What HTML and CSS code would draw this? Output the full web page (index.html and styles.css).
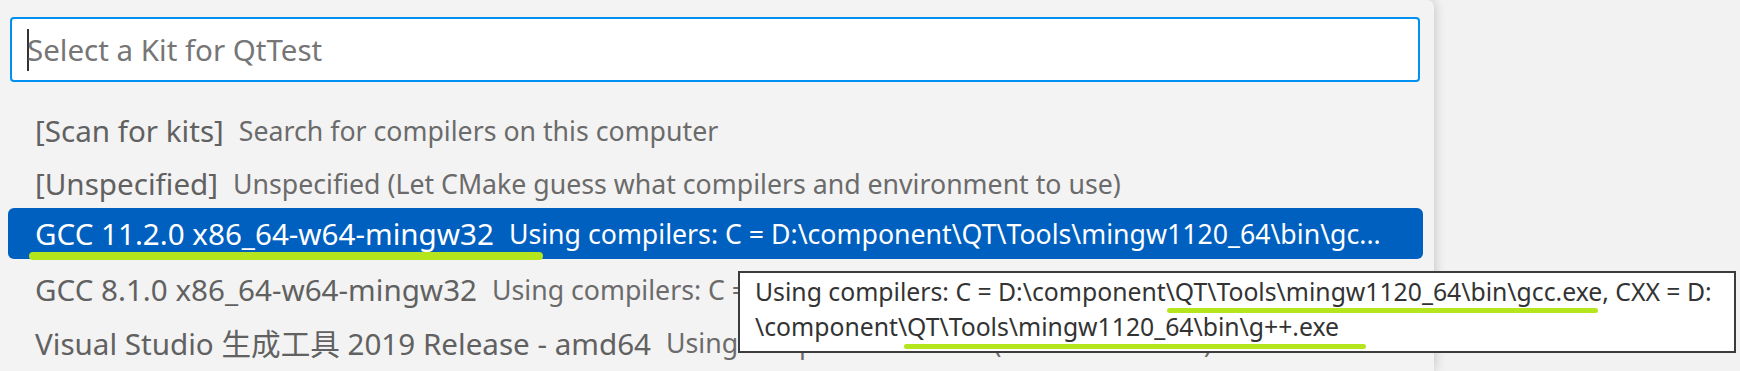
FILE: index.html
```html
<!DOCTYPE html>
<html lang="en">
<head>
<meta charset="utf-8">
<title>Select a Kit</title>
<link rel="stylesheet" href="styles.css">
</head>
<body>
<div class="panel">
  <div class="input">
    <span class="caret"></span><span class="placeholder">Select a Kit for QtTest</span>
  </div>
  <div class="list">
    <div class="row"><span class="label">[Scan for kits]</span><span class="desc">Search for compilers on this computer</span></div>
    <div class="row"><span class="label">[Unspecified]</span><span class="desc">Unspecified (Let CMake guess what compilers and environment to use)</span></div>
    <div class="row active"><span class="label">GCC 11.2.0 x86_64-w64-mingw32</span><span class="desc">Using compilers: C = D:\component\QT\Tools\mingw1120_64\bin\gc...</span></div>
    <div class="row"><span class="label">GCC 8.1.0 x86_64-w64-mingw32</span><span class="desc">Using compilers: C = D:\component\QT\Tools\mingw810_64\bin\gcc.exe, CXX = D:\component\QT\Tools\mingw810_64\bin\g++.exe</span></div>
    <div class="row"><span class="label">Visual Studio 生成工具 2019 Release - amd64</span><span class="desc">Using compilers for 16.11 (x64 architecture)</span></div>
  </div>
</div>
<div class="tooltip">Using compilers: C = D:\component\QT\Tools\mingw1120_64\bin\gcc.exe, CXX = D:<br>\component\QT\Tools\mingw1120_64\bin\g++.exe</div>
<div class="mark mark-label"></div>
<div class="mark mark-tip1"></div>
<div class="mark mark-tip2"></div>
</body>
</html>
```

FILE: styles.css
```css
html, body {
  margin: 0;
  padding: 0;
  height: 100%;
}
body {
  background: #f2f2f2;
  overflow: hidden;
  font-family: "Noto Sans", "Noto Sans CJK SC", sans-serif;
  position: relative;
}
.panel {
  width: 1434px;
  height: 100%;
  box-sizing: border-box;
  background: #f3f3f3;
  border-radius: 0 7px 0 0;
  box-shadow: 0 0 12px rgba(0, 0, 0, 0.22);
  padding: 17px 14px 0 8px;
  display: flex;
  flex-direction: column;
}
.input {
  margin-left: 2px;
  height: 65px;
  box-sizing: border-box;
  border: 2px solid #0090f1;
  border-radius: 4px;
  background: #fff;
  display: flex;
  align-items: center;
  padding-left: 15px;
}
.caret {
  width: 2px;
  height: 42px;
  background: #333;
  margin-right: -2px;
}
.placeholder {
  font-size: 29.5px;
  color: #767676;
  white-space: nowrap;
}
.list {
  margin-top: 22px;
  display: flex;
  flex-direction: column;
  margin-right: -3px;
}
.row {
  height: 53px;
  display: flex;
  align-items: center;
  padding-left: 27px;
  border-radius: 6px;
  white-space: nowrap;
  overflow: hidden;
  color: #616161;
}
.label {
  font-size: 29.6px;
}
.desc {
  font-size: 26.7px;
  margin-left: 15px;
  color: #6b6b6b;
}
.row.active {
  background: #0060c0;
  color: #fff;
  height: 51px;
  margin: -2px 0 4px;
}
.row.active .desc {
  color: #fff;
}
.tooltip {
  position: absolute;
  left: 738px;
  top: 271px;
  width: 998px;
  height: 82px;
  box-sizing: border-box;
  border: 2px solid #3c3c3c;
  background: #fff;
  color: #333;
  font-size: 24.75px;
  line-height: 35px;
  padding: 1px 0 0 15px;
  white-space: nowrap;
}
.mark {
  position: absolute;
  background: #b5e61d;
  border-radius: 4px;
}
.mark-label {
  left: 29px;
  top: 252px;
  width: 514px;
  height: 8px;
}
.mark-tip1 {
  left: 1167px;
  top: 308px;
  width: 431px;
  height: 5px;
  border-radius: 3px;
}
.mark-tip2 {
  left: 904px;
  top: 344px;
  width: 462px;
  height: 5px;
  border-radius: 3px;
}
```
